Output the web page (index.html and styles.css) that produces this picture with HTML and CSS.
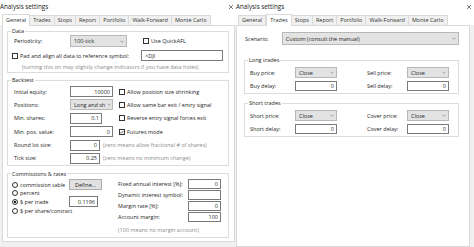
FILE: index.html
```html
<!DOCTYPE html>
<html lang="en">
<head>
  <meta charset="UTF-8" />
  <title>Analysis settings</title>
  <link rel="stylesheet" href="styles.css">
</head>
<body>
  <div class="screen">

    <section class="win win-left">
      <header class="titlebar">
        <span class="title">Analysis settings</span>
        <svg class="close" viewBox="0 0 4 4"><path d="M0 0L4 4M4 0L0 4" /></svg>
      </header>
      <nav class="tabs">
        <span class="tab active">General</span>
        <span class="tab">Trades</span>
        <span class="tab">Stops</span>
        <span class="tab">Report</span>
        <span class="tab">Portfolio</span>
        <span class="tab">Walk-Forward</span>
        <span class="tab">Monte Carlo</span>
      </nav>

      <div class="panel panel-general">
        <fieldset class="group group-data">
          <legend>Data</legend>
          <div class="row row-period">
            <span class="lbl">Periodicity:</span>
            <span class="select w-period">100-tick<svg class="chev" viewBox="0 0 5 3"><polyline points="0.3,0.3 2.5,2.6 4.7,0.3" /></svg></span>
            <label class="check quick"><span class="box"></span>Use QuickAFL</label>
          </div>
          <div class="row row-pad">
            <label class="check"><span class="box"></span>Pad and align all data to reference symbol:</label>
            <span class="input text-left w-symbol">^DJI</span>
          </div>
          <p class="note note-data">(turning this on may slightly change indicators if you have data holes)</p>
        </fieldset>

        <fieldset class="group group-backtest">
          <legend>Backtest</legend>
          <div class="bt-rows">
            <div class="row">
              <span class="lbl">Initial equity:</span>
              <span class="cell"><span class="input w-wide">10000</span></span>
              <label class="check"><span class="box"></span>Allow position size shrinking</label>
            </div>
            <div class="row">
              <span class="lbl">Positions:</span>
              <span class="cell"><span class="select w-wide">Long and sh<svg class="chev" viewBox="0 0 5 3"><polyline points="0.3,0.3 2.5,2.6 4.7,0.3" /></svg></span></span>
              <label class="check"><span class="box"></span>Allow same bar exit / entry signal</label>
            </div>
            <div class="row">
              <span class="lbl">Min. shares:</span>
              <span class="cell"><span class="input w-mid">0.1</span></span>
              <label class="check"><span class="box"></span>Reverse entry signal forces exit</label>
            </div>
            <div class="row">
              <span class="lbl">Min. pos. value:</span>
              <span class="cell"><span class="input w-wide">0</span></span>
              <label class="check"><span class="box checked"><svg viewBox="0 0 4 4"><polyline points="0.4,2 1.5,3.2 3.6,0.8" /></svg></span>Futures mode</label>
            </div>
            <div class="row">
              <span class="lbl">Round lot size:</span>
              <span class="input w-small">0</span>
              <span class="note note-inline">(zero means allow fractional # of shares)</span>
            </div>
            <div class="row">
              <span class="lbl">Tick size:</span>
              <span class="input w-small">0.25</span>
              <span class="note note-inline">(zero means no minimum change)</span>
            </div>
          </div>
        </fieldset>

        <fieldset class="group group-comm">
          <legend>Commissions &amp; rates</legend>
          <div class="comm">
            <div class="comm-left">
              <label class="check"><span class="radio"></span>commission table</label>
              <span class="button">Define...</span>
              <label class="check"><span class="radio"></span>percent</label>
              <span></span>
              <label class="check"><span class="radio checked"></span>$ per trade</label>
              <span class="input w-comm">0.1196</span>
              <label class="check span-2"><span class="radio"></span>$ per share/contract</label>
            </div>
            <div class="comm-right">
              <span class="lbl">Fixed annual interest [%]:</span>
              <span class="input">0</span>
              <span class="lbl">Dynamic interest symbol:</span>
              <span class="input"></span>
              <span class="lbl">Margin rate [%]:</span>
              <span class="input">0</span>
              <span class="lbl">Account margin:</span>
              <span class="input">100</span>
              <span class="note span-2">(100 means no margin account)</span>
            </div>
          </div>
        </fieldset>
      </div>
    </section>

    <section class="win win-right">
      <header class="titlebar">
        <span class="title">Analysis settings</span>
        <svg class="close" viewBox="0 0 4 4"><path d="M0 0L4 4M4 0L0 4" /></svg>
      </header>
      <nav class="tabs">
        <span class="tab">General</span>
        <span class="tab active">Trades</span>
        <span class="tab">Stops</span>
        <span class="tab">Report</span>
        <span class="tab">Portfolio</span>
        <span class="tab">Walk-Forward</span>
        <span class="tab">Monte Carlo</span>
      </nav>

      <div class="panel panel-trades">
        <div class="row row-scenario">
          <span class="lbl">Scenario:</span>
          <span class="select w-scenario">Custom (consult the manual)<svg class="chev" viewBox="0 0 5 3"><polyline points="0.3,0.3 2.5,2.6 4.7,0.3" /></svg></span>
        </div>

        <fieldset class="group group-long">
          <legend>Long trades</legend>
          <div class="trade-grid">
            <span class="lbl">Buy price:</span>
            <span class="select">Close<svg class="chev" viewBox="0 0 5 3"><polyline points="0.3,0.3 2.5,2.6 4.7,0.3" /></svg></span>
            <span></span>
            <span class="lbl">Sell price:</span>
            <span class="select">Close<svg class="chev" viewBox="0 0 5 3"><polyline points="0.3,0.3 2.5,2.6 4.7,0.3" /></svg></span>
            <span class="lbl">Buy delay:</span>
            <span class="input">0</span>
            <span></span>
            <span class="lbl">Sell delay:</span>
            <span class="input">0</span>
          </div>
        </fieldset>

        <fieldset class="group group-short">
          <legend>Short trades</legend>
          <div class="trade-grid">
            <span class="lbl">Short price:</span>
            <span class="select">Close<svg class="chev" viewBox="0 0 5 3"><polyline points="0.3,0.3 2.5,2.6 4.7,0.3" /></svg></span>
            <span></span>
            <span class="lbl">Cover price:</span>
            <span class="select">Close<svg class="chev" viewBox="0 0 5 3"><polyline points="0.3,0.3 2.5,2.6 4.7,0.3" /></svg></span>
            <span class="lbl">Short delay:</span>
            <span class="input">0</span>
            <span></span>
            <span class="lbl">Cover delay:</span>
            <span class="input">0</span>
          </div>
        </fieldset>
      </div>
    </section>

  </div>
</body>
</html>
```

FILE: styles.css
```css
* {
  box-sizing: border-box;
}

body {
  margin: 0;
  background: #f0f0f0;
  font-family: "Open Sans", sans-serif;
  font-size: 5.5px;
  line-height: 8px;
  color: #262626;
}

.screen {
  display: flex;
  width: 474px;
  height: 247px;
  overflow: hidden;
}

.win {
  display: flex;
  flex-direction: column;
  background: #f0f0f0;
}

.win-left {
  width: 236px;
}

.win-right {
  width: 238px;
}

.titlebar {
  height: 13px;
  display: flex;
  align-items: center;
  justify-content: space-between;
  background: #fff;
  padding-right: 3px;
}

.title {
  font-size: 6.3px;
  color: #222;
}

.close {
  width: 4px;
  height: 4px;
  stroke: #444;
  stroke-width: 0.7;
}

/* tabs */
.tabs {
  height: 12px;
  display: flex;
  align-items: flex-end;
  padding-left: 2px;
  background: #fff;
}

.tab {
  height: 10px;
  line-height: 9px;
  padding: 0 3px;
  background: #f0f0f0;
  border: 1px solid #dadada;
  border-left: none;
  border-bottom: none;
  color: #333;
}

.tab:first-child {
  border-left: 1px solid #dadada;
}

.tab.active {
  height: 12px;
  line-height: 11px;
  background: #fff;
  border-left: 1px solid #dadada;
  margin-bottom: -1px;
  position: relative;
  z-index: 1;
}

/* panel */
.panel {
  flex: 1;
  background: #fff;
  border: 1px solid #dadada;
}

.panel-general {
  margin: 0 1px 5px 2px;
  padding: 1px 5px 0 4px;
}

.panel-trades {
  margin: 0 4px 0 0;
  padding: 6px 10px 0 7px;
}

.group {
  margin: 0;
  border: 1px solid #dcdcdc;
  padding: 0 5px 1px 5px;
  min-width: 0;
}

.group legend {
  padding: 0 1px;
  margin-left: -2px;
  line-height: 8px;
}

.row {
  display: flex;
  align-items: center;
}

.lbl {
  white-space: nowrap;
}

.row .lbl {
  width: 57px;
  padding-left: 1px;
}

.note {
  margin: 0;
  color: #8c8c8c;
  white-space: nowrap;
}

/* controls */
.input,
.select,
.button {
  display: flex;
  align-items: center;
  height: 11px;
  white-space: nowrap;
}

.input {
  justify-content: flex-end;
  padding: 0 2px;
  border: 1px solid #7a7a7a;
  background: #fff;
}

.input.text-left {
  justify-content: flex-start;
}

.select {
  justify-content: space-between;
  padding: 0 2px 0 3px;
  background: #e3e3e3;
  border: 1px solid #b8b8b8;
  overflow: hidden;
}

.chev {
  width: 4px;
  height: 3px;
  flex-shrink: 0;
  margin-left: 2px;
  fill: none;
  stroke: #666;
  stroke-width: 0.6;
}

.button {
  justify-content: center;
  width: 33px;
  background: #e1e1e1;
  border: 1px solid #adadad;
}

.check {
  display: flex;
  align-items: center;
  white-space: nowrap;
}

.box {
  width: 6px;
  height: 6px;
  flex-shrink: 0;
  margin-right: 2px;
  border: 1px solid #333;
  background: #fff;
}

.box svg {
  display: block;
  width: 4px;
  height: 4px;
  fill: none;
  stroke: #222;
  stroke-width: 0.7;
}

.radio {
  width: 6px;
  height: 6px;
  flex-shrink: 0;
  margin-right: 2px;
  border: 1px solid #333;
  border-radius: 50%;
  background: #fff;
}

.radio.checked {
  background: radial-gradient(circle, #222 0 1.3px, #fff 1.6px);
}

/* data group */
.row-period {
  height: 12px;
}

.row-period .select {
  height: 12px;
}

.w-period {
  width: 57px;
}

.quick {
  margin-left: 16px;
}

.row-pad {
  height: 11px;
  margin-top: 3px;
}

.row-pad .check {
  margin-left: -1px;
}

.w-symbol {
  width: 82px;
  margin-left: auto;
  padding-left: 3px;
}

.note-data {
  margin: 2px 0 0 9px;
}

/* backtest group */
.group-backtest {
  margin-top: 3px;
}

.bt-rows {
  display: grid;
  grid-auto-rows: 11px;
  row-gap: 2.4px;
  padding-top: 2px;
}

.cell {
  width: 49px;
  display: flex;
}

.w-wide {
  width: 43px;
}

.w-mid {
  width: 32px;
}

.w-small {
  width: 30px;
}

.note-inline {
  margin-left: 3px;
}

/* commissions group */
.group-comm {
  margin-top: 4px;
  padding-bottom: 4px;
}

.comm {
  display: flex;
}

.comm-left {
  width: 106px;
  display: grid;
  grid-template-columns: 57px auto;
  grid-auto-rows: 8.6px;
  align-items: center;
  justify-items: start;
  padding-top: 2.5px;
  margin-left: -1px;
}

.w-comm {
  width: 29px;
}

.span-2 {
  grid-column: span 2;
}

.comm-right {
  display: grid;
  grid-template-columns: 70px 33px;
  grid-auto-rows: 10px;
  row-gap: 1px;
  align-items: center;
  padding-top: 1px;
}

.comm-right .input {
  height: 10px;
}

.comm-right .note {
  margin-top: 4px;
}

/* trades tab */
.row-scenario {
  height: 13px;
  padding-left: 1px;
}

.row-scenario .lbl {
  width: 37px;
  padding-left: 0;
}

.w-scenario {
  width: 178px;
  height: 13px;
}

.group-long {
  margin-top: 11px;
  padding-bottom: 2px;
}

.group-short {
  margin-top: 5px;
  padding-bottom: 2px;
}

.trade-grid {
  display: grid;
  grid-template-columns: 45px 42px 30px 40px 42px;
  grid-auto-rows: 11px;
  row-gap: 2px;
  align-items: center;
  padding-top: 3px;
}

.trade-grid .select {
  height: 11px;
}

.trade-grid .input {
  height: 10px;
}
```
